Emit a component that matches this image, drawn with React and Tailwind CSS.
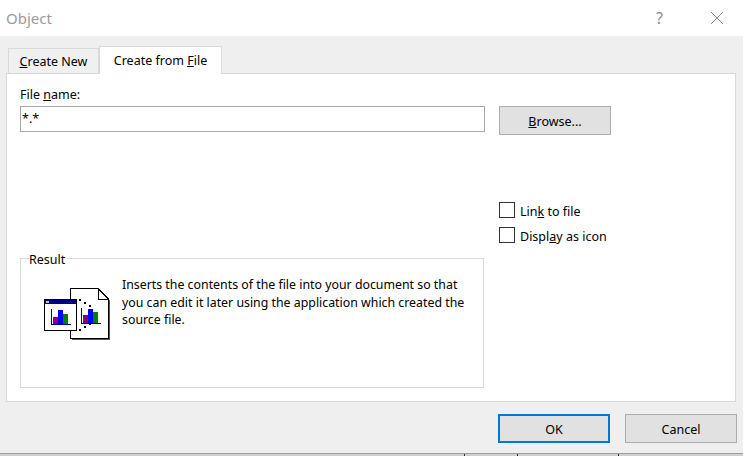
function ChartIcon() {
  return (
    <svg width="75" height="65" viewBox="0 0 75 65" shapeRendering="crispEdges">
      <path d="M31 8.500H59L69 18.500V58.500H31Z" fill="#fff" stroke="#000" />
      <path d="M59 9V19H69" fill="none" stroke="#000" />
      <path d="M70 20h1v40H33v-1h37Z" fill="#555" />
      <rect x="44" y="35" width="5" height="8" fill="#800080" />
      <rect x="49" y="29" width="5" height="14" fill="#0000ff" />
      <rect x="54" y="32" width="5" height="11" fill="#008000" />
      <path d="M42.500 28V43.500H62" fill="none" stroke="#000080" />
      <rect x="5.500" y="19.500" width="32" height="31" fill="#fff" stroke="#000" />
      <rect x="6" y="20" width="31" height="4" fill="#000080" />
      <rect x="7" y="21" width="3" height="2" fill="#c0c0c0" />
      <rect x="14" y="37" width="5" height="7" fill="#800080" />
      <rect x="19" y="30" width="5" height="14" fill="#0000ff" />
      <rect x="24" y="34" width="5" height="10" fill="#008000" />
      <path d="M12.500 29V44.500H32" fill="none" stroke="#000080" />
      <g fill="#000">
        <rect x="40" y="19" width="2" height="2" />
        <rect x="45" y="22" width="2" height="2" />
        <rect x="50" y="25" width="2" height="2" />
        <rect x="50" y="43" width="2" height="2" />
        <rect x="45" y="46" width="2" height="2" />
        <rect x="40" y="49" width="2" height="2" />
      </g>
    </svg>
  );
}

function DialogButton({ children, primary }) {
  return (
    <button
      className={
        primary
          ? "w-[112px] h-[29px] pt-[3px] bg-[#e1e1e1] border-2 border-[#0078d7] text-[12.5px] text-black"
          : "w-[112px] h-[29px] pt-[3px] bg-[#e1e1e1] border border-[#adadad] text-[12.5px] text-black"
      }
    >
      {children}
    </button>
  );
}

function CheckRow({ children }) {
  return (
    <label className="flex items-center gap-[5px] h-[16px] text-[12.5px] text-black">
      <span className="w-[16px] h-[16px] border border-[#333] bg-white" />
      <span className="pt-[4px]">{children}</span>
    </label>
  );
}

export default function App() {
  return (
    <div className="w-[743px] h-[456px] overflow-hidden flex flex-col bg-[#efefef] font-['Noto_Sans',sans-serif]">
      <div className="h-[36px] bg-white flex items-center justify-between shrink-0">
        <span className="pl-[6px] text-[15px] text-[#9b9b9b]">Object</span>
        <div className="flex items-center gap-[47px] pr-[19px]">
          <span className="text-[16px] text-[#8c8c8c]">?</span>
          <svg width="14" height="14" viewBox="0 0 14 14">
            <path d="M1 1L13 13M13 1L1 13" stroke="#8c8c8c" strokeWidth="1" fill="none" />
          </svg>
        </div>
      </div>

      <div className="flex items-end h-[37px] pl-[8px] pt-[9px] shrink-0">
        <div className="h-[25px] w-[91px] pt-[2px] bg-[#f0f0f0] border border-b-0 border-[#d9d9d9] flex items-center justify-center text-[12.5px] text-black">
          <span><u>C</u>reate New</span>
        </div>
        <div className="relative -mb-px h-[28px] w-[123px] pt-[2px] bg-white border border-b-0 border-[#d9d9d9] flex items-center justify-center text-[12.5px] text-black">
          <span>Create from <u>F</u>ile</span>
        </div>
      </div>

      <div className="mx-[6px] w-[730px] h-[329px] bg-white border border-[#d9d9d9] pl-[13px] pt-[13px] shrink-0 flex flex-col">
        <div className="text-[12.5px] leading-[16px] text-black h-[19px]">File <u>n</u>ame:</div>
        <div className="flex gap-[14px] items-start">
          <input
            readOnly
            value="*.*"
            className="w-[465px] h-[26px] border border-[#a9a9a9] px-[1px] pb-[2px] text-[12.5px] text-black outline-none"
          />
          <DialogButton><u>B</u>rowse...</DialogButton>
        </div>
        <div className="flex flex-col gap-[9px] ml-[479px] mt-[67px]">
          <CheckRow>Lin<u>k</u> to file</CheckRow>
          <CheckRow>Displ<u>a</u>y as icon</CheckRow>
        </div>
        <fieldset className="mt-[7px] w-[464px] h-[138px] border border-[#d9d9d9] px-[8px]">
          <legend className="text-[12.5px] leading-[16px] text-black pr-[2px]">
            <span className="relative top-[2px]">Result</span>
          </legend>
          <div className="flex items-start">
            <div className="ml-[10px] mt-[14px] shrink-0 w-[83px]"><ChartIcon /></div>
            <p className="mt-[10px] text-[12.35px] leading-[17.5px] text-black w-[350px]">
              Inserts the contents of the file into your document so that you can edit it later using the application which created the source file.
            </p>
          </div>
        </fieldset>
      </div>

      <div className="flex justify-end gap-[15px] pr-[6px] pt-[12px] h-[51px] shrink-0">
        <DialogButton primary>OK</DialogButton>
        <DialogButton>Cancel</DialogButton>
      </div>

      <div className="flex-1 flex bg-[#cfcfcf] border-t border-[#a0a0a0]">
        <div className="w-[465px] border-r border-[#333]" />
        <div className="w-[53px] border-r border-[#333]" />
        <div className="w-[101px] border-r border-[#333]" />
      </div>
    </div>
  );
}
